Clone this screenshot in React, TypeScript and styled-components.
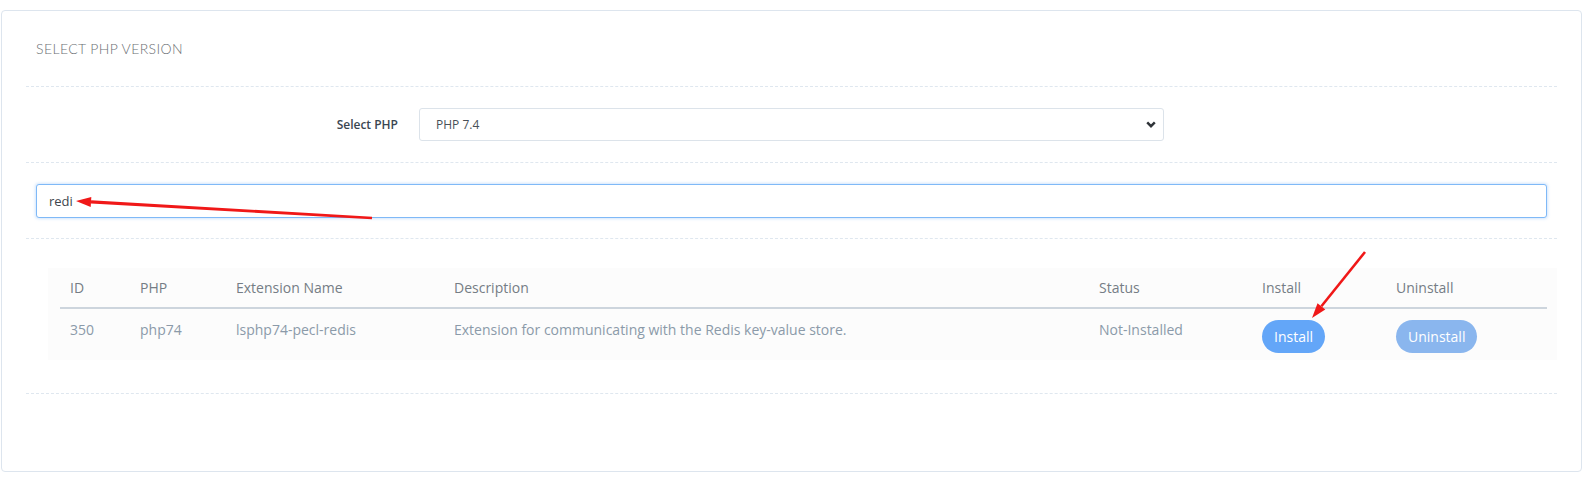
import React from "react";
import styled, { createGlobalStyle } from "styled-components";

const GlobalStyle = createGlobalStyle`
  html, body {
    margin: 0;
    padding: 0;
    background: #ffffff;
  }
  body {
    font-family: "Open Sans", "Noto Sans", sans-serif;
  }
  * {
    box-sizing: border-box;
  }
`;

const rows = [
  {
    id: 350,
    php: "php74",
    name: "lsphp74-pecl-redis",
    description: "Extension for communicating with the Redis key-value store.",
    status: "Not-Installed",
  },
];

// last column takes whatever is left
const columns: { label: string; width?: number }[] = [
  { label: "ID", width: 70 },
  { label: "PHP", width: 96 },
  { label: "Extension Name", width: 218 },
  { label: "Description", width: 645 },
  { label: "Status", width: 163 },
  { label: "Install", width: 134 },
  { label: "Uninstall" },
];

function App() {
  return (
    <>
      <GlobalStyle />
      <Page>
        <Card>
          <TitleSection>
            <Title>Select PHP Version</Title>
          </TitleSection>

          <Section>
            <SelectRow>
              <Label>Select PHP</Label>
              <SelectWrap>
                <Select defaultValue="PHP 7.4">
                  <option>PHP 7.4</option>
                </Select>
                <Chevron viewBox="0 0 10 7" aria-hidden="true">
                  <path d="M1.2 1.3 L5 5.2 L8.8 1.3" />
                </Chevron>
              </SelectWrap>
            </SelectRow>
          </Section>

          <Section>
            <SearchInput type="text" defaultValue="redi" />
          </Section>

          <TableSection>
            <TableBox>
              <Table>
                <colgroup>
                  {columns.map((c) => (
                    <col key={c.label} style={c.width ? { width: c.width } : undefined} />
                  ))}
                </colgroup>
                <thead>
                  <tr>
                    {columns.map((c) => (
                      <Th key={c.label}>{c.label}</Th>
                    ))}
                  </tr>
                </thead>
                <tbody>
                  {rows.map((r) => (
                    <tr key={r.id}>
                      <Td>{r.id}</Td>
                      <Td>{r.php}</Td>
                      <Td>{r.name}</Td>
                      <Td>{r.description}</Td>
                      <Td>{r.status}</Td>
                      <Td>
                        <PillButton $variant="install">Install</PillButton>
                      </Td>
                      <Td>
                        <PillButton $variant="uninstall">Uninstall</PillButton>
                      </Td>
                    </tr>
                  ))}
                </tbody>
              </Table>
            </TableBox>
          </TableSection>

          <LastSection />
        </Card>

        <Annotations viewBox="0 0 1587 483" aria-hidden="true">
          <polygon points="372.1,216.8 371.9,219.2 90.9,203.6 91.1,200.2" />
          <polygon points="76,201 91.3,196.9 90.7,206.9" />
          <polygon points="1364,251.2 1366,252.8 1322.4,307.1 1320.4,305.5" />
          <polygon points="1312,318 1317.5,303.2 1325.3,309.4" />
        </Annotations>
      </Page>
    </>
  );
}

export default App;

const Page = styled.div`
  position: relative;
  width: 1587px;
  height: 483px;
  padding: 10px 5px 0 1px;
`;

const Card = styled.div`
  border: 1px solid #dde5ee;
  border-radius: 4px;
  background: #ffffff;
  padding: 0 24px;
  height: 462px;
  display: flex;
  flex-direction: column;
`;

const Section = styled.div`
  height: 76px;
  display: flex;
  align-items: center;
  border-bottom: 1px dashed #dfe7ef;
`;

const TitleSection = styled(Section)`
  height: 76px;
  padding-left: 10px;
`;

const TableSection = styled(Section)`
  height: 155px;
  align-items: flex-start;
  padding: 29px 0 0 22px;
`;

const LastSection = styled.div`
  flex: 1;
`;

const Title = styled.h4`
  margin: 0;
  font-family: "Lato", "Open Sans", sans-serif;
  font-weight: 300;
  font-size: 14px;
  letter-spacing: 0.4px;
  text-transform: uppercase;
  color: #6b6f74;
`;

const SelectRow = styled.div`
  display: flex;
  align-items: center;
  gap: 21px;
  width: 100%;
`;

const Label = styled.label`
  width: 372px;
  text-align: right;
  font-size: 12px;
  font-weight: 600;
  color: #3a4651;
`;

const SelectWrap = styled.div`
  position: relative;
  width: 745px;
`;

const Select = styled.select`
  appearance: none;
  width: 100%;
  height: 33px;
  padding: 0 28px 0 16px;
  border: 1px solid #dce3ea;
  border-radius: 3px;
  background: #ffffff;
  font-family: "Open Sans", "Noto Sans", sans-serif;
  font-size: 12px;
  color: #495057;
  outline: none;
`;

const Chevron = styled.svg`
  position: absolute;
  right: 8px;
  top: 13px;
  width: 10px;
  height: 7px;
  fill: none;
  stroke: #2f3338;
  stroke-width: 2.4;
  pointer-events: none;
`;

const SearchInput = styled.input`
  width: calc(100% - 20px);
  margin: 0 10px;
  height: 34px;
  padding: 0 12px;
  border: 1px solid #7fb9f7;
  border-radius: 3px;
  box-shadow: 0 0 3px 1px rgba(98, 164, 247, 0.28);
  font-family: "Open Sans", "Noto Sans", sans-serif;
  font-size: 13px;
  color: #40464d;
  outline: none;
`;

const TableBox = styled.div`
  width: 100%;
  height: 92px;
  background: #fcfcfc;
  padding: 0 10px 0 12px;
`;

const Table = styled.table`
  width: 100%;
  table-layout: fixed;
  border-collapse: collapse;
`;

const Th = styled.th`
  height: 40px;
  padding: 0 10px;
  text-align: left;
  font-weight: 400;
  font-size: 14px;
  color: #757d85;
  border-bottom: 2px solid #cdd5dd;
  white-space: nowrap;
`;

const Td = styled.td`
  padding: 10px 10px 0;
  vertical-align: top;
  font-size: 14px;
  line-height: 22px;
  color: #8b9aa9;
  white-space: nowrap;
`;

const PillButton = styled.button<{ $variant: "install" | "uninstall" }>`
  height: 33px;
  margin-top: 1px;
  padding: 0 12px;
  border: none;
  border-radius: 17px;
  background: ${(p) => (p.$variant === "install" ? "#63a6f8" : "#8ab6ee")};
  color: #ffffff;
  font-family: "Open Sans", "Noto Sans", sans-serif;
  font-size: 14px;
  cursor: pointer;
`;

const Annotations = styled.svg`
  position: absolute;
  left: 0;
  top: 0;
  width: 1587px;
  height: 483px;
  fill: #f01818;
  pointer-events: none;
`;
